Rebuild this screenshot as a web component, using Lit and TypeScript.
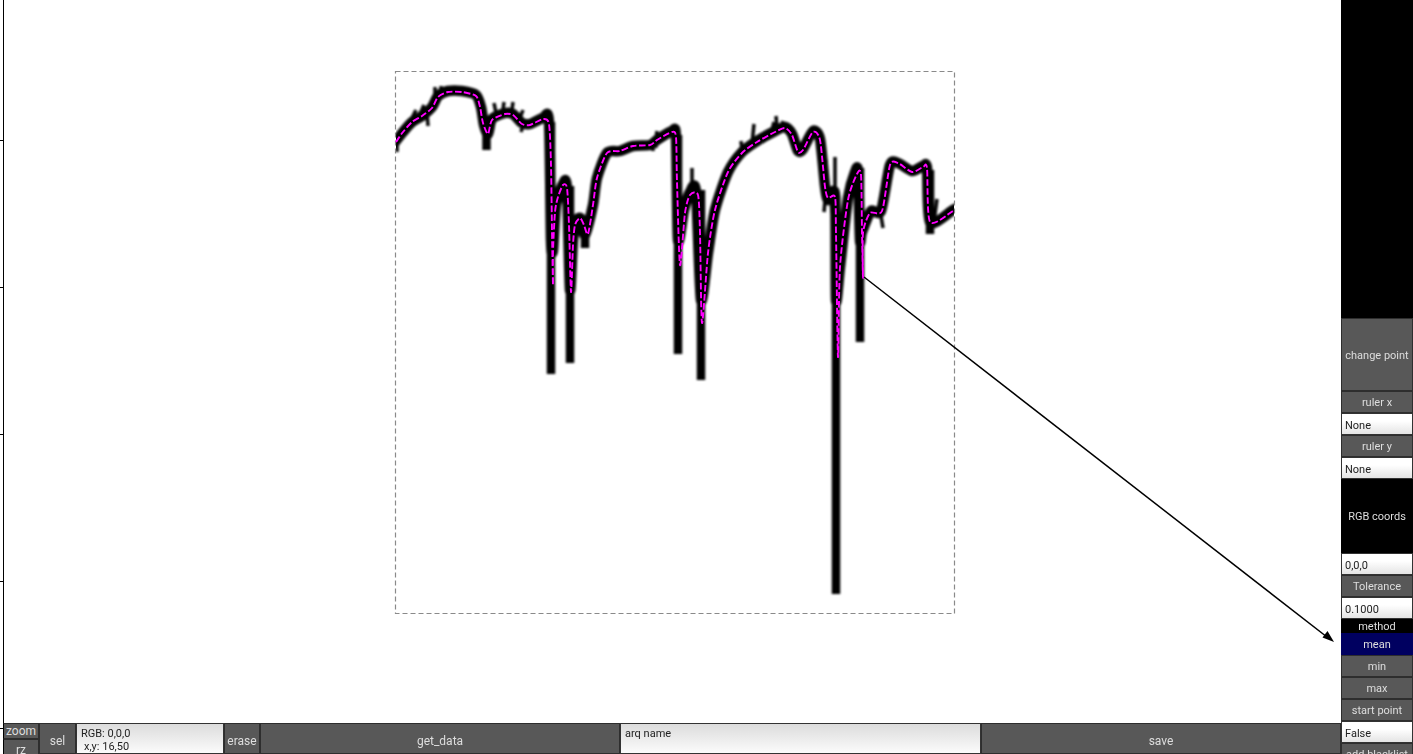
import { LitElement, html, css, svg } from "lit";
import { customElement } from "lit/decorators.js";

const MAGENTA = "396,142 403,132 412,122 422,116 432,108 438,97 448,92 462,92 476,96 480,107 483,123 488,134 492,120 505,114 513,115 522,124 530,125 543,119 549,124 551,165 552,232 553,285 553,252 555,212 558,197 563,185 567,188 569,225 571,292 573,245 575,225 580,218 584,225 588,234 593,205 597,178 607,153 620,151 633,146 650,145 657,140 672,132 676,137 677,182 680,265 685,213 690,195 698,195 700,233 702,323 708,253 715,210 728,172 742,153 757,142 775,132 785,128 792,135 798,152 803,150 813,132 820,140 825,187 828,198 835,197 836,233 838,357 840,267 848,200 857,174 861,175 862,233 863,278 863,233 870,213 882,211 890,165 898,163 912,172 923,167 927,168 930,222 953,211";

const BLACK = "392,146 403,132 412,122 422,116 432,107 438,96 448,91 462,91 476,95 481,107 484,125 488,134 492,119 505,113 513,114 522,123 530,124 543,118 549,122 551,240 553,250 556,205 563,184 567,188 570,290 573,240 577,220 581,219 585,235 593,205 597,178 607,153 620,151 633,146 650,145 657,140 672,131 676,137 678,240 684,210 690,192 696,192 701,300 708,253 715,210 728,172 742,152 757,141 775,131 785,127 792,134 798,151 803,149 813,131 820,139 825,186 828,200 835,195 836,300 840,267 848,198 855,172 858,172 860,240 862,232 871,211 881,211 890,165 898,163 912,171 923,166 927,168 930,222 953,210 958,208";

// vertical absorption spikes, ending square at their measured depth
const SPIKES = [
  [486.5, 125, 151], [551, 122, 375], [570, 186, 364], [678, 135, 355],
  [701, 190, 381], [836, 196, 595], [860, 168, 343], [585, 225, 249], [930, 170, 235],
];

// short tufts that give the traced curve its rough upper edge
const TUFTS = [
  "M397 142 L397 152", "M411 120 L416 110", "M420 114 L424 105", "M427 112 L428 126", "M435 98 L435 87",
  "M441 92 L441 86", "M496 113 L494 103", "M503 110 L504 102", "M512 110 L513 102",
  "M520 118 L523 110", "M524 122 L521 132", "M653 142 L653 151",
  "M656 138 L657 131", "M655 139 L656 148", "M742 150 L741 141", "M752 144 L754 124",
  "M772 130 L774 122", "M777 128 L776 116", "M781 129 L783 121", "M826 190 L824 212",
  "M831 200 L832 213", "M835 196 L835 157", "M692 185 L692 168", "M880 210 L883 228",
  "M934 222 L937 199", "M827 195 L826 160",
];

/** Rounded path through the traced points, with short tangents so the sharp dips do not overshoot. */
function smooth(points: string): string {
  const p = points.split(" ").map((s) => s.split(",").map(Number));
  let d = `M${p[0][0]} ${p[0][1]}`;
  const k = 1 / 8;
  for (let i = 0; i < p.length - 1; i++) {
    const a = p[Math.max(i - 1, 0)];
    const b = p[i];
    const c = p[i + 1];
    const e = p[Math.min(i + 2, p.length - 1)];
    const c1 = [b[0] + (c[0] - a[0]) * k, b[1] + (c[1] - a[1]) * k];
    const c2 = [c[0] - (e[0] - b[0]) * k, c[1] - (e[1] - b[1]) * k];
    d += `C${c1[0]} ${c1[1]} ${c2[0]} ${c2[1]} ${c[0]} ${c[1]}`;
  }
  return d;
}

@customElement("app-root")
export class AppRoot extends LitElement {
  static styles = css`
    :host {
      display: block;
      width: 1413px;
      height: 754px;
      overflow: hidden;
      background: #fff;
      font-family: Roboto, "Liberation Sans", sans-serif;
      font-size: 12px;
    }
    .app { display: flex; height: 754px; overflow: hidden; }
    .main { width: 1341px; flex: none; display: flex; flex-direction: column; height: 754px; }
    .canvas { display: block; width: 1341px; height: 723px; flex: none; }
    .bottom { display: flex; height: 31px; flex: none; background: #fff; filter: blur(0.35px); }
    .gutter { display: block; width: 3px; height: 31px; flex: none; }
    .side { width: 72px; flex: none; display: flex; flex-direction: column; height: 754px; background: #000; overflow: hidden; font-size: 11px; filter: blur(0.35px); }
    .btn {
      display: flex; align-items: center; justify-content: center;
      background: #585858; color: #dedede; box-sizing: border-box;
      border: 1px solid #2e2e2e; white-space: nowrap; overflow: hidden; flex: none;
    }
    .bottom > .btn { padding-top: 4px; }
    .side .btn { padding-top: 1px; }
    .input {
      display: flex; box-sizing: border-box; flex: none;
      background: linear-gradient(#fff 35%, #e4e4e4);
      color: #222; padding: 4px 0 0 3px; line-height: 15px; font-size: 11px;
      border: 1px solid #333; white-space: pre; overflow: hidden;
    }
    .bottom .input {
      background: linear-gradient(#dcdcdc, #fbfbfb);
      padding: 3px 0 0 4px; line-height: 13px; display: block;
    }
    .label { display: flex; align-items: center; justify-content: center; color: #dedede; flex: none; background: #000; padding-top: 1px; box-sizing: border-box; }
    .h22 { height: 22px; }
    .side .mean { background: #000060; border-color: #000060; }
    .stack { width: 36px; display: flex; flex-direction: column; flex: none; }
    .stack .btn { border-left-color: #000; }
    .zoom { height: 16px; }
    .rz { height: 22px; }
    .sel { width: 37px; }
    .rgb { width: 148px; }
    .erase { width: 36px; }
    .get { width: 360px; }
    .arq { width: 361px; }
    .save { width: 360px; }
    .lead { height: 318px; flex: none; }
    .tall { height: 73px; }
    .coords { height: 74px; }
    .method { height: 14px; }
    .line { display: block; }
    .indent { padding-left: 3px; }
  `;

  render() {
    return html`
      <div class="app">
        <div class="main">
          <svg class="canvas" viewBox="0 0 1341 723" xmlns="http://www.w3.org/2000/svg">
            <defs>
              <filter id="soft" x="-5%" y="-5%" width="110%" height="110%">
                <feGaussianBlur stdDeviation="1.2"></feGaussianBlur>
              </filter>
              <clipPath id="plot">
                <rect x="396" y="72" width="558" height="541"></rect>
              </clipPath>
            </defs>
            <rect width="1341" height="723" fill="#fff"></rect>
            <path d="M3.5 0V723" stroke="#000" fill="none"></path>
            <path d="M0 140.5H3M0 287.5H3M0 434.5H3M0 581.5H3" stroke="#000" fill="none"></path>
            <g clip-path="url(#plot)">
              <g filter="url(#soft)" fill="none" stroke="#000">
                <path d=${smooth(BLACK)} stroke-width="10.5" stroke-linejoin="round"></path>
                ${SPIKES.map(([x, a, b]) => svg`<path d="M${x} ${a}V${b - 1}" stroke-width="8.5"></path>`)}
                ${TUFTS.map((d) => svg`<path d=${d} stroke-width="3.5"></path>`)}
              </g>
            </g>
            <rect x="395.5" y="71.5" width="559" height="542" fill="none" stroke="#8a8a8a" stroke-width="1.2" stroke-dasharray="5 3"></rect>
            <path d=${smooth(MAGENTA)} fill="none" stroke="#f0f" stroke-width="1.9" stroke-dasharray="6.5 2.5"></path>
            <path d="M864 277L1327 637" stroke="#000" stroke-width="1.5" fill="none"></path>
            <path d="M1334 642L1322.5 637.5L1327.5 631Z" fill="#000"></path>
          </svg>
          <div class="bottom">
            <svg class="gutter" viewBox="0 0 3 31" xmlns="http://www.w3.org/2000/svg">
              <path d="M0 5.5H3" stroke="#000" fill="none"></path>
            </svg>
            <div class="stack">
              <div class="btn zoom">zoom</div>
              <div class="btn rz">rz</div>
            </div>
            <div class="btn sel">sel</div>
            <div class="input rgb"><span class="line">RGB: 0,0,0</span><span class="line indent">x,y: 16,50</span></div>
            <div class="btn erase">erase</div>
            <div class="btn get">get_data</div>
            <div class="input arq">arq name</div>
            <div class="btn save">save</div>
          </div>
        </div>
        <div class="side">
          <div class="lead"></div>
          <div class="btn tall">change point</div>
          <div class="btn h22">ruler x</div>
          <div class="input h22">None</div>
          <div class="btn h22">ruler y</div>
          <div class="input h22">None</div>
          <div class="label coords">RGB coords</div>
          <div class="input h22">0,0,0</div>
          <div class="btn h22">Tolerance</div>
          <div class="input h22">0.1000</div>
          <div class="label method">method</div>
          <div class="btn h22 mean">mean</div>
          <div class="btn h22">min</div>
          <div class="btn h22">max</div>
          <div class="btn h22">start point</div>
          <div class="input h22">False</div>
          <div class="btn h22">add blacklist</div>
        </div>
      </div>
    `;
  }
}
